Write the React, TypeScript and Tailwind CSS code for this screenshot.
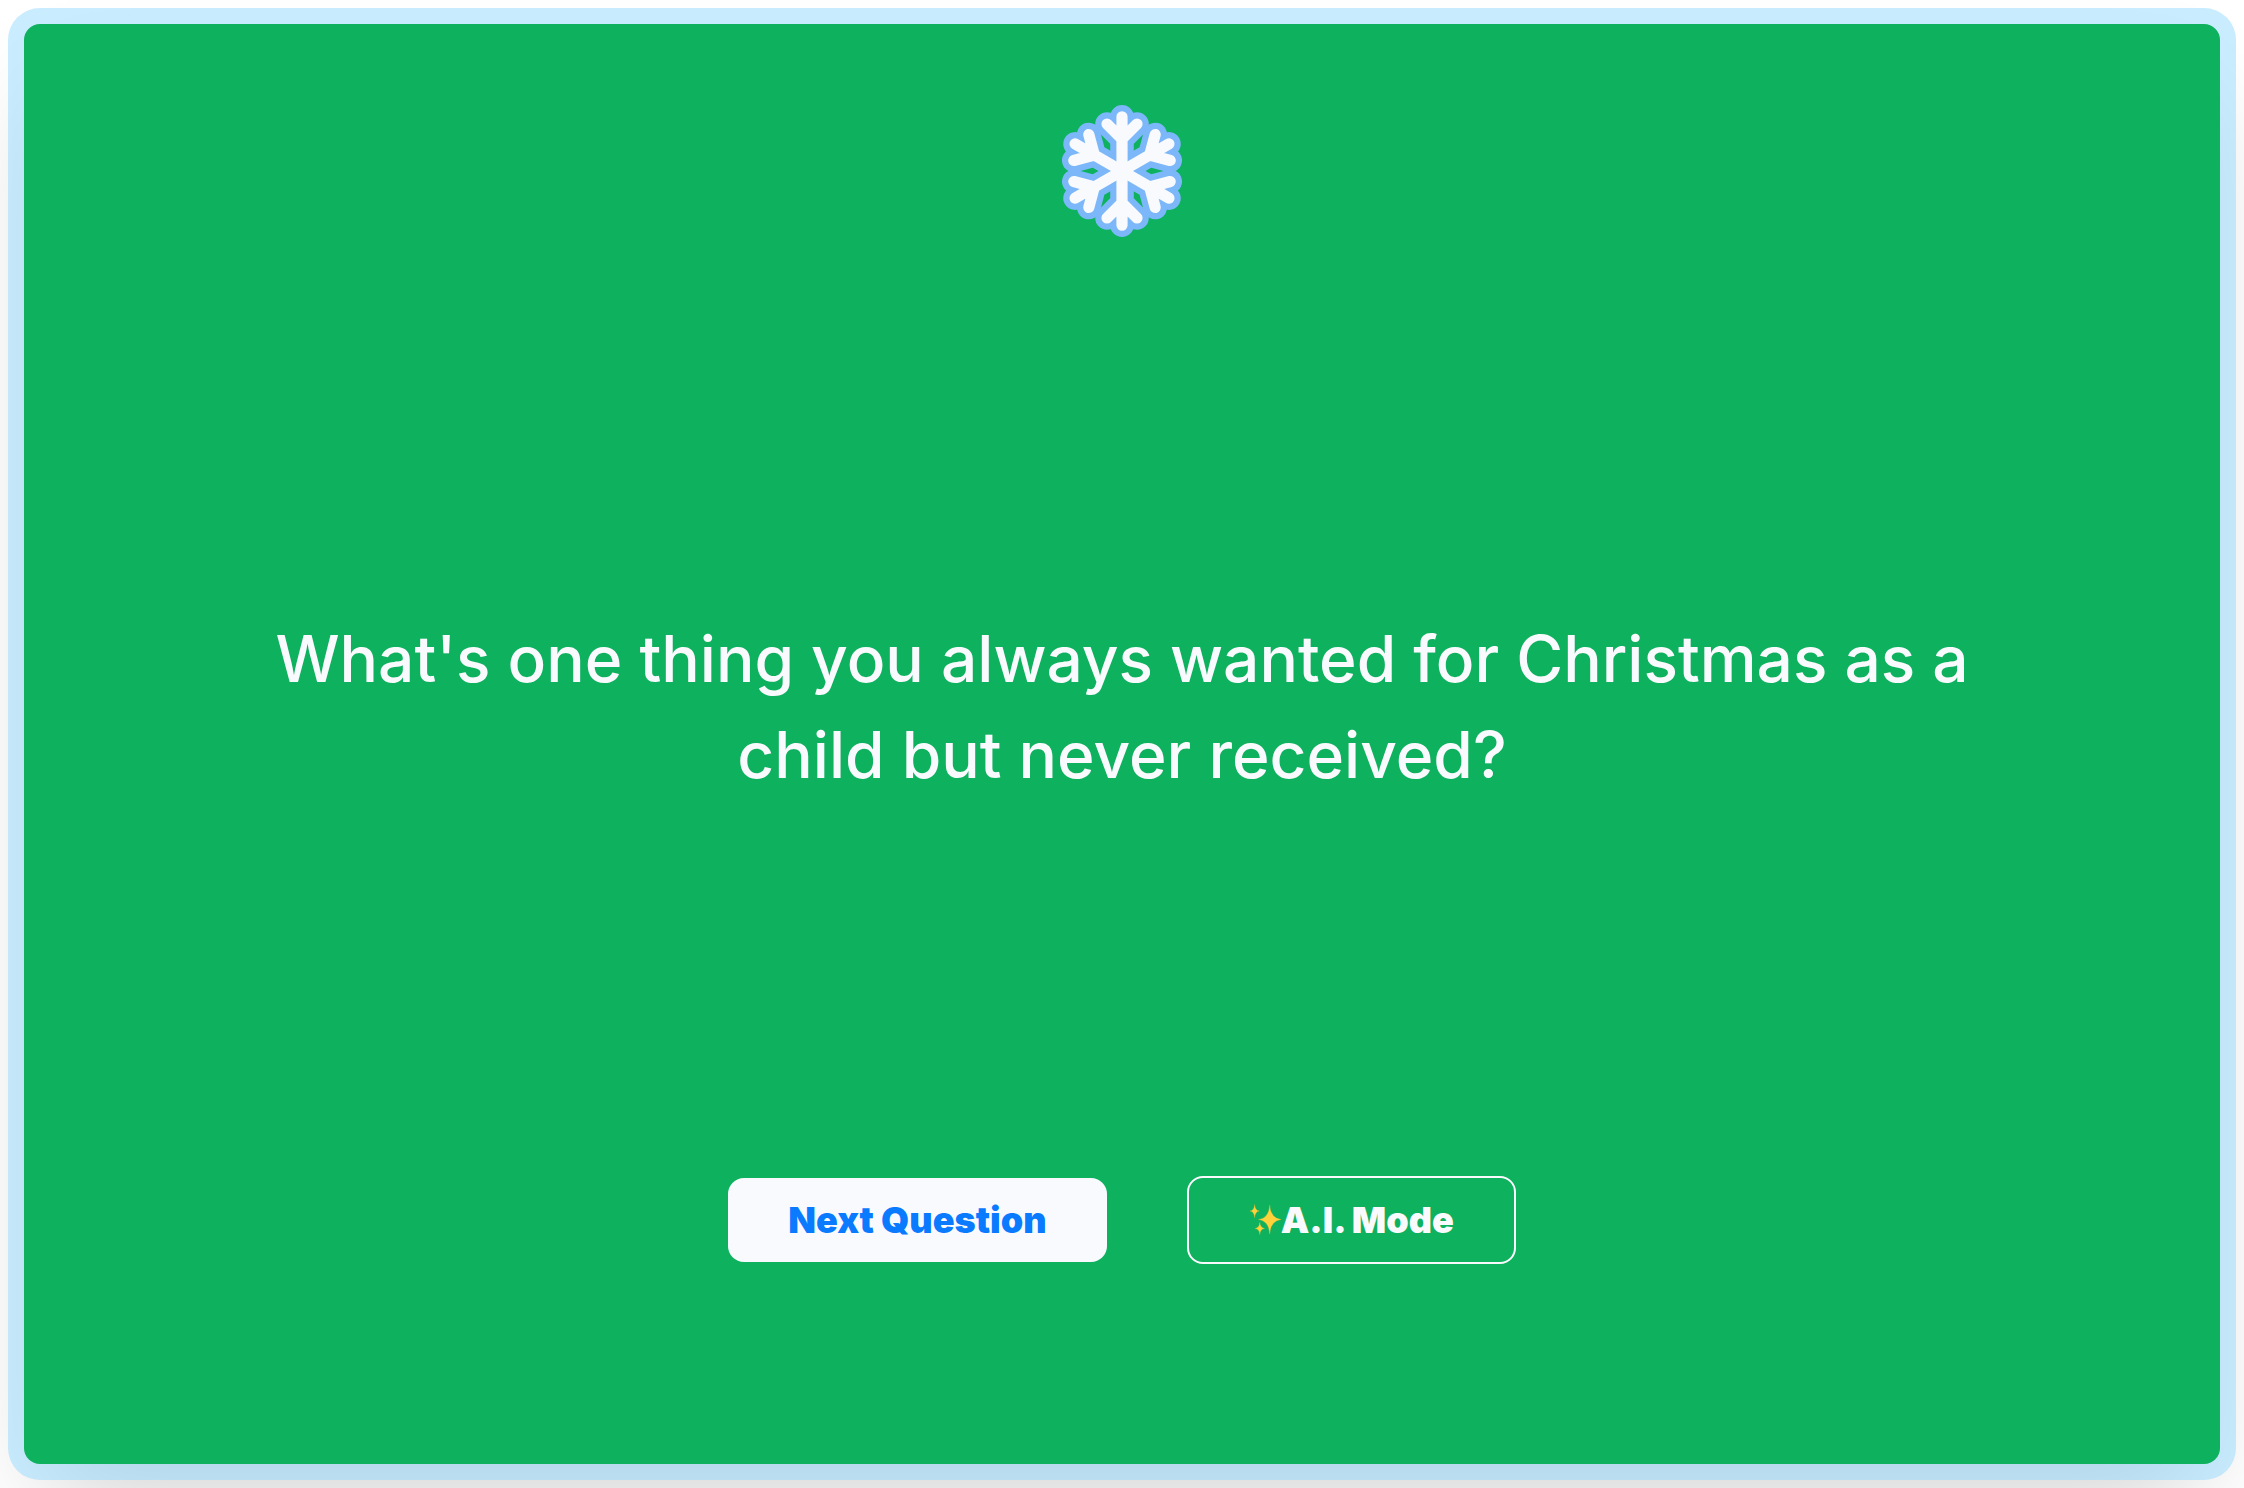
import { useState } from "react";

const questions = [
  "What's one thing you always wanted for Christmas as a child but never received?",
];

const arms = [0, 60, 120, 180, 240, 300];

function Snowflake() {
  return (
    <svg viewBox="-66 -66 132 132" className="w-[132px] h-[132px]" fill="none" aria-hidden="true">
      {/* Blue outline sits under the white arms */}
      {[
        { color: "#7CB7F9", width: 23.6 },
        { color: "#F9FAFE", width: 11.2 },
      ].map((layer) => (
        <g key={layer.color} stroke={layer.color} strokeWidth={layer.width} strokeLinecap="round">
          {arms.map((angle) => (
            <path key={angle} d="M0 0V-54.2M0 -32L-15 -47M0 -32L15 -47" transform={`rotate(${angle})`} />
          ))}
        </g>
      ))}
    </svg>
  );
}

function Sparkles() {
  return (
    <svg viewBox="0 0 34 34" className="w-8 h-8" aria-hidden="true">
      <g fill="#FDD23A" stroke="#E9BC3A" strokeWidth="0.3" strokeLinejoin="round">
        <path d="M22 1Q22.8 15 34 16.5Q22.8 18 22 32Q21.2 18 10 16.5Q21.2 15 22 1Z" />
        <path d="M6 0.5Q6.4 7 11 7.5Q6.4 8 6 14.5Q5.6 8 1 7.5Q5.6 7 6 0.5Z" />
        <path d="M11.5 19.5Q11.9 25.5 16.5 26Q11.9 26.5 11.5 32.5Q11.1 26.5 6.5 26Q11.1 25.5 11.5 19.5Z" />
      </g>
    </svg>
  );
}

export default function App() {
  const [index, setIndex] = useState(0);
  const [aiMode, setAiMode] = useState(false);

  return (
    <main className="min-h-screen p-6 flex bg-white overflow-hidden font-['Inter',sans-serif]">
      <section className="flex-1 flex flex-col items-center justify-between pt-[81px] pb-50 px-10 rounded-2xl bg-[#0EB15D] text-[#F9FAFE] shadow-[0_0_0_16px_rgba(150,218,255,0.5),0_50px_100px_-24px_rgba(0,0,0,0.2)]">
        <Snowflake />

        <h1 className="max-w-[1760px] text-center text-[64px] leading-24 font-medium">
          {questions[index]}
        </h1>

        <div className="flex items-center gap-20">
          <button
            type="button"
            onClick={() => setIndex((index + 1) % questions.length)}
            className="h-21 px-15 rounded-2xl bg-[#F9FAFE] text-[#0A7AFF] text-4xl font-black"
          >
            Next Question
          </button>
          <button
            type="button"
            aria-pressed={aiMode}
            onClick={() => setAiMode(!aiMode)}
            className="h-22 px-15 flex items-center rounded-2xl border-2 border-[#F9FAFE] text-4xl font-black"
          >
            <Sparkles />
            A.I. Mode
          </button>
        </div>
      </section>
    </main>
  );
}
